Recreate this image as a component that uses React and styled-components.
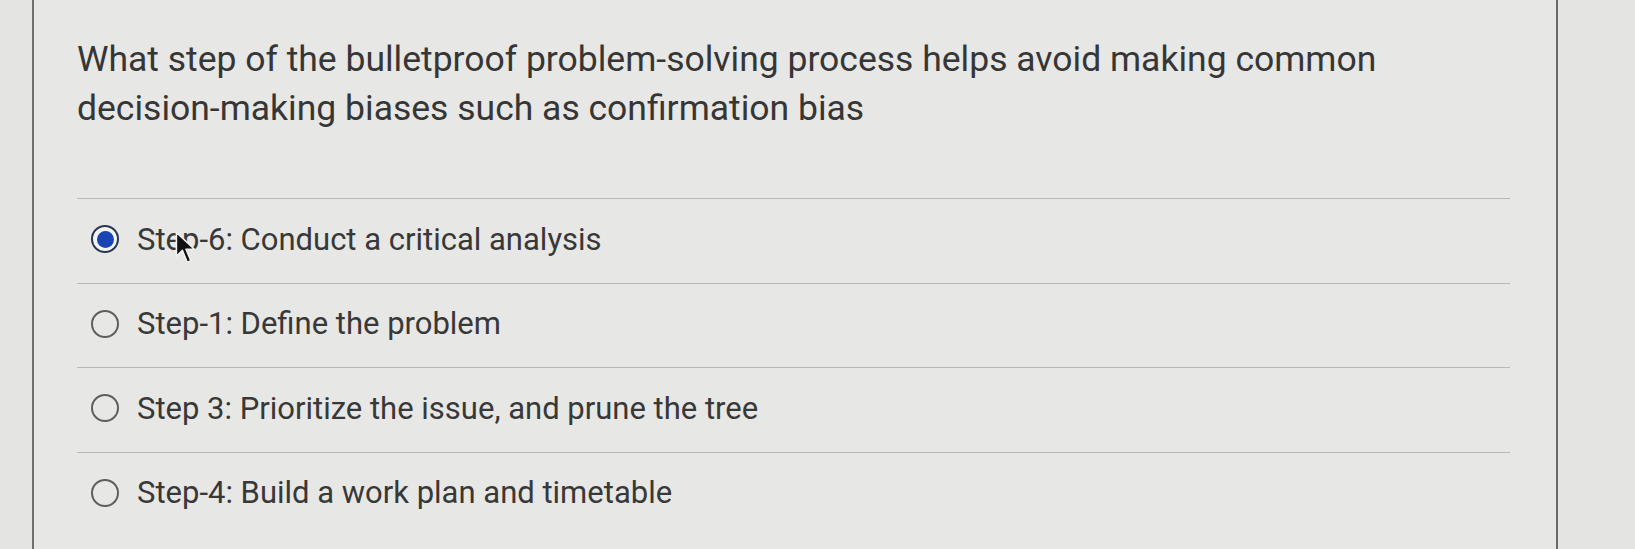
import React from 'react';
import styled, { createGlobalStyle } from 'styled-components';

const GlobalStyle = createGlobalStyle`
  html, body {
    margin: 0;
    padding: 0;
    background: #e4e4e2;
    font-family: Roboto, "Liberation Sans", sans-serif;
  }
`;

const Page = styled.div`
  height: 549px;
  overflow: hidden;
  display: flex;
  padding: 0 77px 0 32px;
`;

const Panel = styled.div`
  flex: 1;
  height: 549px;
  box-sizing: border-box;
  border-left: 2px solid #6f6f70;
  border-right: 2px solid #6a6a6c;
  background: #e7e7e5;
  padding: 35px 0 0 43px;
  position: relative;
`;

const Question = styled.h1`
  margin: 0;
  font-weight: 400;
  font-size: 35.5px;
  line-height: 49px;
  color: #363636;
  width: 1400px;
`;

const Options = styled.div`
  margin-top: 65px;
  width: 1433px;
`;

const Option = styled.label`
  display: flex;
  align-items: center;
  gap: 18px;
  height: 84.5px;
  border-top: 1.5px solid #b9b9b8;
  padding-left: 14px;
  padding-bottom: 3px;
  box-sizing: border-box;
  font-size: 31px;
  color: #383838;
  cursor: pointer;
`;

const Radio = styled.span`
  width: 28px;
  height: 28px;
  box-sizing: border-box;
  border-radius: 50%;
  border: 2px solid ${p => (p.checked ? '#2a3550' : '#5e5e5e')};
  display: flex;
  align-items: center;
  justify-content: center;
  flex-shrink: 0;
  background: ${p => (p.checked ? '#f4f4f6' : 'transparent')};

  &::after {
    content: '';
    display: ${p => (p.checked ? 'block' : 'none')};
    width: 17px;
    height: 17px;
    border-radius: 50%;
    background: #1845b3;
  }
`;

// mouse pointer caught in the photo, lying over the first option
const Cursor = styled.svg`
  position: absolute;
  left: 140px;
  top: 230px;
`;

const options = [
  { text: 'Step-6: Conduct a critical analysis', checked: true },
  { text: 'Step-1: Define the problem' },
  { text: 'Step 3: Prioritize the issue, and prune the tree' },
  { text: 'Step-4: Build a work plan and timetable' },
];

export default function App() {
  return (
    <Page>
      <GlobalStyle />
      <Panel>
        <Question>
          What step of the bulletproof problem-solving process helps avoid making common
          decision-making biases such as confirmation bias
        </Question>
        <Options>
          {options.map(o => (
            <Option key={o.text}>
              <Radio checked={o.checked} />
              {o.text}
            </Option>
          ))}
        </Options>
        <Cursor width="24" height="36" viewBox="0 0 20 30">
          <path d="M2 2 L2 22 L7 17 L11 27 L14 25.5 L10 16 L17 16 Z" fill="#111" stroke="#f2f2f2" strokeWidth="1.3" strokeLinejoin="round" />
        </Cursor>
      </Panel>
    </Page>
  );
}
